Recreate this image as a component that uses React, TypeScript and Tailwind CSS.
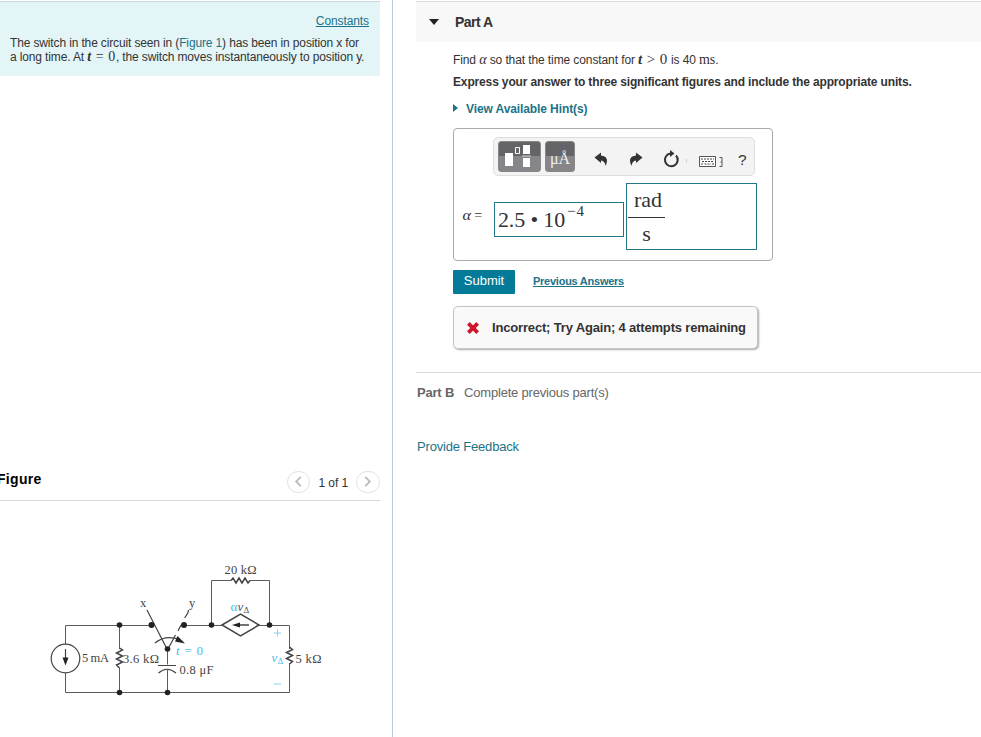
import type { ReactNode } from 'react';

const mathFont = "font-['Liberation_Serif',serif]";

function MathText({ children, className = '' }: { children: ReactNode; className?: string }) {
  return <span className={`${mathFont} leading-none ${className}`}>{children}</span>;
}

function Problem() {
  return (
    <section className="mt-px h-[75px] w-[380px] border-t border-[#c8dadd] bg-[#e4f5f7] pl-[10px] text-[12px] leading-[14px]">
      <div className="pt-[12px] pr-[11px] text-right tracking-[-0.1px]">
        <a href="#" className="text-[#1b7388] underline">Constants</a>
      </div>
      <p className="mt-[8px] tracking-[-0.14px] whitespace-nowrap">
        The switch in the circuit seen in (<a href="#" className="text-[#1b7388]">Figure 1</a>) has been in position x for
        <br />
        a long time. At <MathText className="text-[14px] tracking-[0.6px]"><i className="font-bold">t</i> = 0</MathText>, the switch moves instantaneously to position y.
      </p>
    </section>
  );
}

function Circuit() {
  return (
    <svg viewBox="0 0 380 170" className="mt-[49px] block h-[170px] w-[380px] font-['Liberation_Serif',serif]" fill="none">
      <g stroke="#5c5c5c" strokeWidth="1">
        <path d="M65.500 94V75.500H151M65.500 123V142.500H289.500V113" />
        <path d="M119.500 75V99M119.500 118V142" />
        <path d="M184 75.500H222M258 75.500H289.500V99" />
        <path d="M211.500 75V30.500H231M250 30.500H269.500V75" />
        <path d="M167.500 99V114.500M167.500 120V142" />
      </g>
      <g stroke="#444" strokeWidth="1.200">
        <circle cx="65.500" cy="108.500" r="14.300" />
        <path d="M65.500 99V110" />
        <path d="M147 60L167 99M188.500 60Q188.500 63 184.500 68M181 75L178 81M175.500 85L168 99" />
        <path d="M155 93Q166 84 180 90" />
        <path d="M158 115.500H176M158.500 123Q167 115.500 176 123" />
      </g>
      <g stroke="#444" strokeWidth="1.500">
        <path d="M119.500 98L122.500 100L116.500 103L122.500 106L116.500 109L122.500 112L116.500 115L119.500 118" />
        <path d="M289.500 97L292.500 99.500L286.500 102.500L292.500 105.500L286.500 108.500L292.500 111.500L289.500 114" />
        <path d="M231 30.500L233 28L236 33L239 28L242 33L245 28L248 33L250 30.500" />
        <path d="M222 75L240.500 64L259 75L240.500 86Z" />
        <path d="M238 75H249" />
      </g>
      <g fill="#222">
        <path d="M62.500 107.500H68.500L65.500 115.500Z" />
        <path d="M177.500 86L185 93.500L175 91.500Z" />
        <path d="M232 75L240 72.500V77.500Z" />
        <circle cx="119.500" cy="75" r="2.800" />
        <circle cx="151.500" cy="75" r="3" />
        <circle cx="184" cy="75" r="3" />
        <circle cx="211.500" cy="75" r="2.800" />
        <circle cx="269.500" cy="75" r="2.800" />
        <circle cx="167.500" cy="99" r="2.800" />
        <circle cx="119.500" cy="142.500" r="2.800" />
        <circle cx="167.500" cy="142.500" r="2.800" />
      </g>
      <g fill="#444" fontSize="12.500">
        <text x="140" y="57">x</text>
        <text x="189" y="57">y</text>
        <text x="224.500" y="23.500" textLength="32">20 kΩ</text>
        <text x="82" y="112" textLength="27">5 mA</text>
        <text x="123" y="113" textLength="36">3.6 kΩ</text>
        <text x="179.500" y="124" textLength="34">0.8 μF</text>
        <text x="295.500" y="113" textLength="26">5 kΩ</text>
      </g>
      <g fill="#4abde5" fontSize="13">
        <text x="176" y="105" textLength="27"><tspan fontStyle="italic">t</tspan> = 0</text>
        <text x="230.500" y="61">α</text>
        <text x="237.500" y="61" fill="#555" fontStyle="italic">v</text>
        <text x="243.500" y="63" fill="#555" fontSize="9">Δ</text>
        <text x="271.500" y="112" fontStyle="italic">v</text>
        <text x="277.500" y="114" fontSize="9">Δ</text>
      </g>
      <path d="M274 83H281M277.500 79.500V86.500M274 134H281" stroke="#86d2ec" />
    </svg>
  );
}

function FigurePanel() {
  return (
    <section className="mt-[390px] w-[380px]">
      <div className="flex h-[35px] justify-between border-b border-[#d7d7d7]">
        <h2 className="-ml-[3px] pt-[3px] text-[14px] leading-[20px] font-bold tracking-[0.3px] text-black">Figure</h2>
        <div className="mt-[4px] flex h-[23px] items-center">
          <button className="flex h-[22px] w-[23px] items-center justify-center rounded-full border border-[#e2e2e2]">
            <svg viewBox="0 0 8 12" className="h-[11px] w-[8px]" fill="none" stroke="#bbb" strokeWidth="2"><path d="M7 1L2 6L7 11" /></svg>
          </button>
          <span className="ml-[9px] pt-[2px] text-[12px] tracking-[-0.1px]">1 of 1</span>
          <button className="ml-[8px] flex h-[22px] w-[24px] items-center justify-center rounded-full border border-[#e2e2e2]">
            <svg viewBox="0 0 8 12" className="h-[11px] w-[8px]" fill="none" stroke="#bbb" strokeWidth="2"><path d="M1 1L6 6L1 11" /></svg>
          </button>
        </div>
      </div>
      <Circuit />
    </section>
  );
}

function Toolbar() {
  return (
    <div className="ml-[39px] flex h-[39px] w-[262px] rounded-[5px] border border-[#dedede] bg-[#f3f3f3] pt-[3px] pl-[4px]">
      <button className="h-[31px] w-[43px] rounded-[3px] border border-[#888] bg-linear-to-b from-[#646468] from-50% to-[#85858a] to-50%">
        <svg viewBox="0 0 41 29" className="h-[29px] w-[41px]">
          <path fill="#fff" d="M6 11H14V24H6ZM24 3H31V12H24ZM24 16H31V25H24Z" />
          <path fill="none" stroke="#fff" d="M16.500 5.500H20.500V11.500H16.500Z" />
          <path stroke="#d5d5d5" d="M23 14H32" />
        </svg>
      </button>
      <button className={`ml-[4px] h-[31px] w-[30px] rounded-[3px] border border-[#888] bg-linear-to-b from-[#646468] from-50% to-[#85858a] to-50% pt-[4px] text-[16px] leading-[25px] text-[#eee] ${mathFont}`}>
        μÅ
      </button>
      <svg viewBox="0 0 179 34" className="h-[34px] w-[179px]" fill="#333">
        <path d="M19.500 16.500L26 11.500V14.500Q35 15.500 30.500 25Q30 20 26 19.500V22Z" />
        <path d="M67.500 16.500L61 11.500V14.500Q52 15.500 56.500 25Q57 20 61 19.500V22Z" />
        <path d="M101 14.500A6.400 6.400 0 1 1 95.500 12.500" fill="none" stroke="#333" strokeWidth="2" />
        <path d="M95 9L99.500 12.500L95 16Z" />
        <path d="M111.500 18V21" stroke="#ccc" fill="none" />
        <path d="M124.500 15.500H140.500V25.500H124.500Z" fill="#fff" stroke="#555" />
        <path d="M126 18H139M127 20.500H139M126 23H128.500M129.500 23H136M137 23H139" fill="none" stroke="#444" strokeDasharray="2 1" />
        <path d="M144.500 16.500H147V25.500H144.500M145.500 21H147" fill="none" stroke="#555" />
        <text x="163" y="24" fontSize="15.500" fontFamily="Liberation Sans">?</text>
      </svg>
    </div>
  );
}

function AnswerBox() {
  return (
    <div className="mt-[11px] h-[133px] w-[320px] rounded-[4px] border border-[#aaa] pt-[8px]">
      <Toolbar />
      <div className="mt-[7px] flex pl-[9px]">
        <MathText className="flex w-[31px] items-baseline gap-[4px] pt-[26px] text-[14px]">
          <i className="inline-block scale-x-115">α</i>=
        </MathText>
        <div className="mt-[19px] h-[35px] w-[130px] border border-[#237589] pl-[3px]">
          <MathText className="flex pt-[6px] text-[22px] tracking-[-0.15px] whitespace-pre">2.5 • 10<sup className="top-[-5px] ml-[2px] text-[15px] leading-none tracking-[1px]">−4</sup></MathText>
        </div>
        <div className="ml-[2px] h-[67px] w-[131px] border border-[#237589] pl-[1px]">
          <div className={`flex h-[34px] w-[37px] justify-center border-b border-[#333] pt-[5px] pl-[3px] text-[22px] leading-[22px] ${mathFont}`}>rad</div>
          <div className={`w-[37px] pt-[5px] text-center text-[22px] leading-[22px] ${mathFont}`}>s</div>
        </div>
      </div>
    </div>
  );
}

function PartA() {
  return (
    <section>
      <h2 className="mt-px flex h-[41px] items-center border-t border-[#d7dcdd] bg-[#f8f8f8] pl-[13px] text-[14px] font-bold tracking-[-0.5px]">
        <svg viewBox="0 0 10 6" className="mr-[16px] h-[6px] w-[10px]"><path d="M0 0H10L5 6Z" fill="#222" /></svg>
        Part A
      </h2>
      <div className="pl-[37px] text-[12px]">
        <p className="mt-[10px] h-[16px] leading-[16px] tracking-[-0.1px] whitespace-nowrap">
          Find <MathText className="text-[14px]"><i>α</i></MathText> so that the time constant for <MathText className="text-[15px] tracking-[0.4px]"><i className="font-bold">t</i> &gt; 0</MathText> is 40 <MathText className="text-[14px]">ms</MathText>.
        </p>
        <p className="mt-[6px] leading-[16px] font-bold tracking-[-0.146px]">Express your answer to three significant figures and include the appropriate units.</p>
        <button className="mt-[11px] flex items-center leading-[16px] font-bold tracking-[-0.1px] text-[#1b7388]">
          <svg viewBox="0 0 5 8" className="mr-[8px] mb-[3px] h-[8px] w-[5px]"><path d="M0 0L5 4L0 8Z" fill="currentColor" /></svg>
          View Available Hint(s)
        </button>
        <AnswerBox />
        <div className="mt-[9px] flex">
          <button className="h-[24px] w-[62px] rounded-[1px] bg-[#047a99] pb-[2px] text-[13px] leading-[22px] text-white">Submit</button>
          <a href="#" className="ml-[18px] pt-[3px] text-[11px] leading-[16px] font-bold tracking-[-0.25px] text-[#1b7388] underline">Previous Answers</a>
        </div>
        <div className="mt-[12px] flex h-[43px] w-[305px] items-center rounded-[5px] border border-[#c5c5c5] bg-[#f9f9f9] pl-[12px] text-[13px] font-bold tracking-[-0.17px] whitespace-nowrap shadow-[1px_1px_2px_#aaa]">
          <svg viewBox="0 0 12 12" className="mr-[12px] h-[14px] w-[14px]"><path d="M2 2L10 10M10 2L2 10" stroke="#cf142b" strokeWidth="3.200" /></svg>
          Incorrect; Try Again; 4 attempts remaining
        </div>
      </div>
    </section>
  );
}

export default function App() {
  return (
    <main className="flex h-[737px] w-[981px] overflow-hidden bg-white font-['Liberation_Sans',sans-serif] text-[#333]">
      <aside className="w-[393px] shrink-0 border-r border-[#bcccd7]">
        <Problem />
        <FigurePanel />
      </aside>
      <div className="ml-[23px] flex-1">
        <PartA />
        <section className="mt-[23px] border-t border-[#d7d7d7] pt-[12px] pl-px text-[13px] leading-[16px] tracking-[-0.2px] text-[#666]">
          <span className="mr-[10px] font-bold">Part B</span>Complete previous part(s)
        </section>
        <a href="#" className="mt-[38px] ml-px block text-[13px] leading-[16px] tracking-[-0.18px] text-[#1b7388]">Provide Feedback</a>
      </div>
    </main>
  );
}
